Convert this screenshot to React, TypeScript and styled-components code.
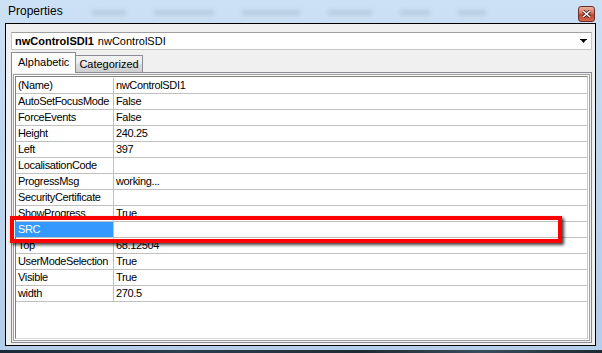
import React from 'react';
import styled, { createGlobalStyle } from 'styled-components';

const GlobalStyle = createGlobalStyle`
  html, body {
    margin: 0;
    padding: 0;
    background: #ffffff;
  }
`;

const Frame = styled.div`
  position: relative;
  width: 602px;
  height: 353px;
  overflow: hidden;
  display: flex;
  flex-direction: column;
  background: linear-gradient(180deg, #cde1f5 0%, #bed6ee 40%, #b4cde8 100%);
  font-family: 'Liberation Sans', Arial, sans-serif;
`;

const TitleBar = styled.div`
  height: 23px;
  flex: none;
  display: flex;
  align-items: center;
  justify-content: space-between;
  padding: 0 7px 0 8px;
  position: relative;
`;

const Title = styled.span`
  font-size: 12px;
  color: #000;
  margin-top: -1px;
  position: relative;
  z-index: 1;
`;

const Ghosts = styled.div`
  position: absolute;
  left: 92px;
  top: 10px;
  display: flex;
  gap: 28px;
  filter: blur(2px);
  opacity: 0.18;
`;

const Ghost = styled.span<{ $w: number }>`
  width: ${(p) => p.$w}px;
  height: 5px;
  background: #5a6d82;
`;

const CloseButton = styled.div`
  width: 17px;
  height: 16px;
  box-sizing: border-box;
  margin-top: 5px;
  border: 1px solid #6b2f27;
  border-radius: 3px;
  background: linear-gradient(180deg, #eab0a2 0%, #d8735f 45%, #c2432f 55%, #d4674f 100%);
  display: flex;
  align-items: center;
  justify-content: center;
  position: relative;
  z-index: 1;
`;

const Client = styled.div`
  flex: none;
  height: 323px;
  margin: 0 6px 0 5px;
  box-sizing: border-box;
  border: 1px solid #000;
  background: #f0f0f0;
  padding: 8px 3px 2px 5px;
  display: flex;
  flex-direction: column;
`;

const Combo = styled.div`
  height: 18px;
  flex: none;
  box-sizing: border-box;
  border: 1px solid #c5c5c5;
  border-top-color: #a0a0a0;
  background: #fff;
  display: flex;
  align-items: center;
  padding: 0 3px 0 3px;
  font-size: 11px;
  color: #000;
`;

const ComboName = styled.span`
  font-weight: bold;
  margin-right: 4px;
`;

const ComboType = styled.span`
  flex: 1;
`;

const TabRow = styled.div`
  height: 21px;
  flex: none;
  margin-top: 2px;
  display: flex;
  align-items: flex-end;
`;

const Tab = styled.div<{ $active?: boolean }>`
  box-sizing: border-box;
  height: ${(p) => (p.$active ? 21 : 18)}px;
  padding: 0 ${(p) => (p.$active ? 6 : 3)}px;
  margin-left: ${(p) => (p.$active ? 0 : -1)}px;
  border: 1px solid #898c95;
  border-bottom: ${(p) => (p.$active ? 'none' : '1px solid #898c95')};
  background: ${(p) =>
    p.$active ? '#fcfcfc' : 'linear-gradient(180deg, #f2f2f2 0%, #ebebeb 50%, #dddddd 51%, #cfcfcf 100%)'};
  font-size: 11px;
  line-height: ${(p) => (p.$active ? 19 : 16)}px;
  color: #000;
  position: relative;
  z-index: ${(p) => (p.$active ? 1 : 0)};
`;

const Panel = styled.div`
  flex: 1;
  box-sizing: border-box;
  border: 1px solid #898c95;
  padding: 1px;
  background: #f0f0f0;
  display: flex;
  margin-top: -1px;
`;

const PanelInner = styled.div`
  flex: 1;
  box-sizing: border-box;
  border: 1px solid #a0a0a0;
  padding: 1px;
  background: #fff;
  display: flex;
`;

const GridBox = styled.div`
  flex: 1;
  box-sizing: border-box;
  border: 1px solid #808080;
  border-right-color: #c8c8c8;
  border-bottom-color: #d8d8d8;
  background: #fff;
  padding-top: 1px;
  display: flex;
  flex-direction: column;
`;

const Row = styled.div`
  height: 16px;
  box-sizing: border-box;
  border-bottom: 1px solid #c0c0c0;
  display: flex;
  font-size: 11px;
  line-height: 15px;
  letter-spacing: -0.35px;
  color: #000;
`;

const NameCell = styled.div<{ $selected?: boolean }>`
  width: 98px;
  flex: none;
  box-sizing: border-box;
  border-right: 1px solid #c0c0c0;
  padding-left: 2px;
  white-space: nowrap;
  overflow: hidden;
  background: ${(p) => (p.$selected ? '#3399ff' : 'transparent')};
  color: ${(p) => (p.$selected ? '#fff' : '#000')};
`;

const ValueCell = styled.div`
  flex: 1;
  padding-left: 2px;
  white-space: nowrap;
`;

const Callout = styled.div`
  position: absolute;
  left: 10px;
  top: 216px;
  width: 552px;
  height: 27px;
  box-sizing: border-box;
  border: 4px solid #ff0000;
  box-shadow: 2px 2px 3px rgba(0, 0, 0, 0.75);
  pointer-events: none;
`;

const BottomEdge = styled.div`
  flex: 1;
  display: flex;
  flex-direction: column;
  justify-content: flex-end;
`;

const Taskbar = styled.div`
  height: 3px;
  background: linear-gradient(90deg, #1b2a38 0%, #2c3e4f 30%, #1d2b36 60%, #3a4d5c 80%, #1c2a35 100%);
`;

const props: [string, string][] = [
  ['(Name)', 'nwControlSDI1'],
  ['AutoSetFocusMode', 'False'],
  ['ForceEvents', 'False'],
  ['Height', '240.25'],
  ['Left', '397'],
  ['LocalisationCode', ''],
  ['ProgressMsg', 'working...'],
  ['SecurityCertificate', ''],
  ['ShowProgress', 'True'],
  ['SRC', ''],
  ['Top', '68.12504'],
  ['UserModeSelection', 'True'],
  ['Visible', 'True'],
  ['width', '270.5'],
];

const App = () => {
  return (
    <>
      <GlobalStyle />
      <Frame>
        <TitleBar>
          <Title>Properties</Title>
          <Ghosts>
            <Ghost $w={34} />
            <Ghost $w={60} />
            <Ghost $w={58} />
            <Ghost $w={44} />
            <Ghost $w={30} />
            <Ghost $w={28} />
          </Ghosts>
          <CloseButton>
            <svg width="9" height="8" viewBox="0 0 9 8">
              <path d="M1 1 L8 7 M8 1 L1 7" stroke="#3b1a15" strokeWidth="3" />
              <path d="M1 1 L8 7 M8 1 L1 7" stroke="#ffffff" strokeWidth="1.6" />
            </svg>
          </CloseButton>
        </TitleBar>
        <Client>
          <Combo>
            <ComboName>nwControlSDI1</ComboName>
            <ComboType>nwControlSDI</ComboType>
            <svg width="8" height="5" viewBox="0 0 8 5">
              <path d="M0 0 H7 V1 H0 Z M1 1 H6 L3.5 4 Z" fill="#000" />
            </svg>
          </Combo>
          <TabRow>
            <Tab $active>Alphabetic</Tab>
            <Tab>Categorized</Tab>
          </TabRow>
          <Panel>
            <PanelInner>
              <GridBox>
                {props.map(([name, value]) => (
                  <Row key={name}>
                    <NameCell $selected={name === 'SRC'}>{name}</NameCell>
                    <ValueCell>{value}</ValueCell>
                  </Row>
                ))}
              </GridBox>
            </PanelInner>
          </Panel>
        </Client>
        <BottomEdge>
          <Taskbar />
        </BottomEdge>
        <Callout />
      </Frame>
    </>
  );
};

export default App;
